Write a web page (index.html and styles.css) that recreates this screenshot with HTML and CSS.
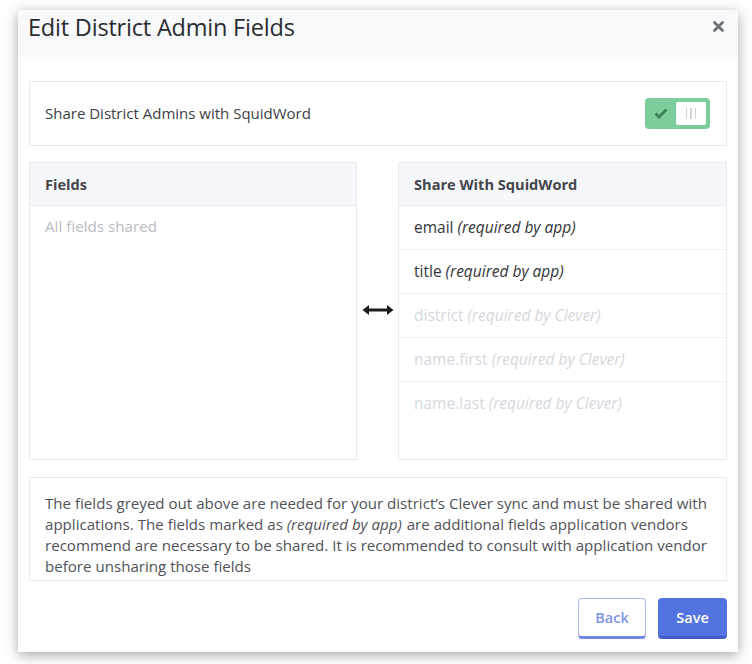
FILE: index.html
```html
<!DOCTYPE html>
<html>
<head>
<meta charset="utf-8">
<link rel="stylesheet" href="styles.css">
</head>
<body>
<div class="modal">
  <div class="modal-header">
    <h1 class="title">Edit District Admin Fields</h1>
    <span class="close">
      <svg width="11" height="11" viewBox="0 0 11 11"><path d="M1.5 1.5 L9.5 9.5 M9.5 1.5 L1.5 9.5" stroke="#6b6e75" stroke-width="2.6" stroke-linecap="round"/></svg>
    </span>
  </div>
  <div class="modal-body">
    <div class="share-box">
      <span class="share-label">Share District Admins with SquidWord</span>
      <span class="toggle">
        <svg class="check" width="14" height="11" viewBox="0 0 14 11"><path d="M1.5 5.5 L5 9 L12.5 1.5" fill="none" stroke="#3d7f57" stroke-width="2.8"/></svg>
        <span class="knob"><i></i><i></i><i></i></span>
      </span>
    </div>
    <div class="lists">
      <div class="panel">
        <div class="panel-head">Fields</div>
        <div class="panel-empty">All fields shared</div>
      </div>
      <div class="arrow">
        <svg width="32" height="12" viewBox="0 0 32 12"><path d="M3 6 H29" stroke="#1b1c1f" stroke-width="3"/><path d="M0.5 6 L7 1 V11 Z M31.5 6 L25 1 V11 Z" fill="#1b1c1f"/></svg>
      </div>
      <div class="panel">
        <div class="panel-head">Share With SquidWord</div>
        <div class="row">email <em>(required by app)</em></div>
        <div class="row">title <em>(required by app)</em></div>
        <div class="row muted">district <em>(required by Clever)</em></div>
        <div class="row muted">name.first <em>(required by Clever)</em></div>
        <div class="row muted">name.last <em>(required by Clever)</em></div>
      </div>
    </div>
    <div class="notes">The fields greyed out above are needed for your district’s Clever sync and must be shared with applications. The fields marked as <em>(required by app)</em> are additional fields application vendors recommend are necessary to be shared. It is recommended to consult with application vendor before unsharing those fields</div>
    <div class="actions">
      <button class="btn btn-back">Back</button>
      <button class="btn btn-save">Save</button>
    </div>
  </div>
</div>
</body>
</html>
```
FILE: styles.css
```css
html, body {
  margin: 0;
  padding: 0;
  background: #ffffff;
}
body {
  font-family: "Open Sans", Lato, sans-serif;
  color: #3a3c42;
  width: 752px;
  height: 664px;
  overflow: hidden;
}
.modal {
  margin: 10px 0 0 18px;
  width: 720px;
  height: 642px;
  background: #ffffff;
  box-shadow: 0 3px 12px rgba(0, 0, 0, 0.35);
  display: flex;
  flex-direction: column;
}
.modal-header {
  height: 47px;
  background: #f8f9fb;
  display: flex;
  align-items: flex-start;
  justify-content: space-between;
  padding: 0 14px 0 10px;
}
.title {
  margin: 3px 0 0 0;
  font-size: 23.5px;
  line-height: 29px;
  font-weight: 400;
  color: #2a2b2f;
  letter-spacing: -0.2px;
}
.close {
  margin-top: 11px;
  display: flex;
}
.modal-body {
  padding: 24px 11px 0 11px;
  display: flex;
  flex-direction: column;
}
.share-box {
  height: 63px;
  border: 1px solid #e9eaef;
  display: flex;
  align-items: center;
  justify-content: space-between;
  padding: 0 16px 0 15px;
}
.share-label {
  font-size: 15px;
  color: #3c3e44;
  margin-bottom: 1px;
}
.toggle {
  width: 65px;
  height: 31px;
  box-sizing: border-box;
  background: #7ccc9c;
  border-radius: 4px;
  display: flex;
  align-items: center;
  justify-content: space-between;
  padding: 0 4px 0 9px;
}
.knob {
  width: 30px;
  height: 23px;
  background: #ffffff;
  border-radius: 2px;
  display: flex;
  align-items: center;
  justify-content: center;
  gap: 3px;
}
.knob i {
  width: 1.5px;
  height: 11px;
  background: #cfd2d7;
}
.lists {
  margin-top: 16px;
  display: flex;
  height: 298px;
}
.panel {
  width: 329px;
  box-sizing: border-box;
  border: 1px solid #e9eaef;
  display: flex;
  flex-direction: column;
}
.panel:first-child {
  width: 328px;
}
.panel-head {
  height: 42px;
  flex: none;
  background: #f6f7fa;
  border-bottom: 1px solid #e9eaef;
  line-height: 42px;
  padding-left: 15px;
  font-size: 14.6px;
  font-weight: 700;
  color: #44464c;
}
.panel-empty {
  padding: 10px 15px;
  font-size: 15.2px;
  line-height: 21px;
  color: #b9bcc3;
}
.arrow {
  width: 41px;
  display: flex;
  align-items: center;
  justify-content: center;
  padding-bottom: 3px;
}
.row {
  height: 43px;
  flex: none;
  border-bottom: 1px solid #eeeff3;
  line-height: 43px;
  padding-left: 15px;
  font-size: 15.5px;
  color: #33353a;
}
.row:last-child {
  border-bottom: none;
}
.row em {
  font-style: italic;
}
.row.muted {
  color: #d6d8de;
}
.notes {
  margin-top: 17px;
  height: 104px;
  box-sizing: border-box;
  border: 1px solid #e9eaef;
  padding: 15px 15px 0 15px;
  font-size: 15.1px;
  line-height: 21px;
  color: #505258;
}
.notes em {
  padding-right: 1px;
}
.actions {
  margin-top: 17px;
  display: flex;
  justify-content: flex-end;
  gap: 12px;
}
.btn {
  height: 41px;
  font-family: "Open Sans", Lato, sans-serif;
  font-size: 14.5px;
  font-weight: 600;
  border-radius: 4px;
  padding: 0;
  cursor: pointer;
}
.btn-back {
  width: 68px;
  background: #ffffff;
  color: #7c93e8;
  border: 1px solid #a9b9f3;
  border-bottom: 3px solid #6f88e6;
}
.btn-save {
  width: 69px;
  background: #5273e0;
  color: #ffffff;
  border: none;
  border-bottom: 3px solid #3f5dc4;
}
```
